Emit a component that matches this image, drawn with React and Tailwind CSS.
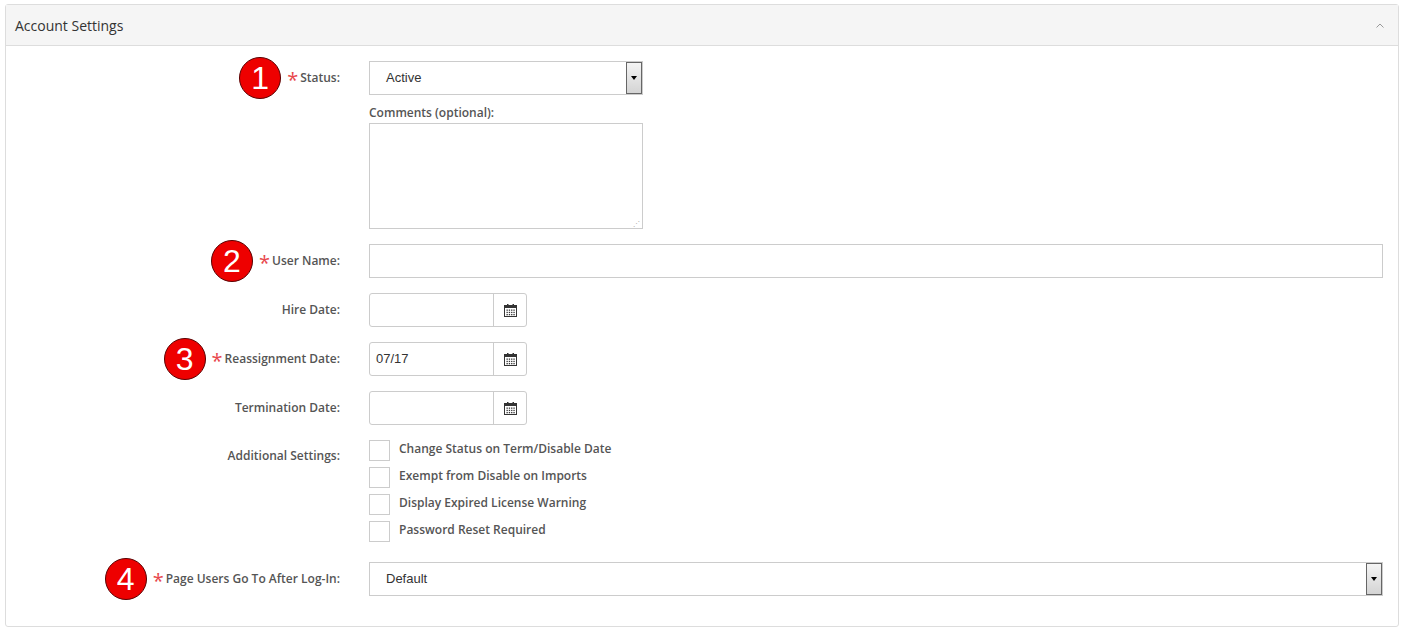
import React from "react";

const Badge = ({ n }) => (
  <span className="mr-[6px] flex h-[42px] w-[42px] items-center justify-center rounded-full border border-[#5a0000] bg-[#ee0000] text-[32px] leading-none text-white" style={{ fontFamily: "'Liberation Sans', Arial, sans-serif" }}>{n}</span>
);

const Label = ({ text, req, badge, top }) => (
  <div className={`flex w-[334px] shrink-0 justify-end ${top ? "items-start pt-[8px]" : "items-center"}`}>
    {badge && <Badge n={badge} />}
    {req && <span className="mr-[2px] text-[20px] leading-none text-[#e8474c] mt-[4px]">*</span>}
    <span className="text-[12px] font-semibold text-[#555]">{text}</span>
  </div>
);

const Cal = () => (
  <svg width="13" height="13" viewBox="0 0 13 13">
    <rect x="0.5" y="1.5" width="12" height="11" fill="none" stroke="#333" />
    <rect x="0.5" y="1.5" width="12" height="2.5" fill="#333" />
    <rect x="3" y="0" width="1.5" height="3" fill="#333" />
    <rect x="8.5" y="0" width="1.5" height="3" fill="#333" />
    {[5.5, 7.8, 10].map((y) => [2.5, 4.8, 7.1, 9.4].map((x) => <rect key={x + "-" + y} x={x} y={y} width="1.3" height="1.3" fill="#333" />))}
  </svg>
);

const DateInput = ({ value }) => (
  <div className="flex h-[34px] w-[158px] rounded-[3px] border border-[#ccc]">
    <div className="flex flex-1 items-center px-[6px] text-[13px] text-[#333]" style={{ fontFamily: "'Liberation Sans', Arial, sans-serif" }}>{value}</div>
    <div className="flex w-[33px] items-center justify-center border-l border-[#ccc]"><Cal /></div>
  </div>
);

const Select = ({ value, w }) => (
  <div className={`flex h-[34px] ${w} items-center justify-between border border-[#ccc] pl-[16px]`} style={{ fontFamily: "'Liberation Sans', Arial, sans-serif" }}>
    <span className="text-[13px] text-[#333]">{value}</span>
    <div className="flex h-[32px] w-[16px] items-center justify-center border border-[#666] bg-gradient-to-b from-[#f4f4f4] to-[#d4d4d4]">
      <span className="h-0 w-0 border-x-[3.5px] border-t-[4px] border-x-transparent border-t-black" />
    </div>
  </div>
);

const Row = ({ children, className = "" }) => <div className={`flex ${className}`}>{children}</div>;

export default function App() {
  return (
    <div className="min-h-[627px] bg-white pl-[5px] pr-[3px] pt-[4px]" style={{ fontFamily: "'Open Sans', sans-serif" }}>
      <div className="h-[623px] rounded-[3px] border border-[#ddd]">
        <div className="flex h-[41px] items-center justify-between border-b border-[#ddd] bg-[#f5f5f5] px-[9px]">
          <span className="text-[14px] text-[#333]">Account Settings</span>
          <svg width="8" height="5" viewBox="0 0 8 5" className="mr-[5px]"><path d="M0.5 4.5 L4 1 L7.5 4.5" fill="none" stroke="#999" /></svg>
        </div>
        <div className="flex flex-col gap-[15px] pr-[15px] pt-[15px]">
          <Row className="gap-[29px]">
            <div className="flex h-[34px]"><Label text="Status:" req badge="1" /></div>
            <div className="flex flex-col">
              <Select value="Active" w="w-[274px]" />
              <span className="mt-[9px] text-[12px] font-semibold text-[#555]">Comments (optional):</span>
              <div className="relative mt-[1px] h-[106px] w-[274px] border border-[#ccc]">
                <span className="absolute bottom-[1px] right-[2px] text-[7px] leading-none text-[#aaa]">⋰</span>
              </div>
            </div>
          </Row>
          <Row className="h-[34px] gap-[29px]">
            <Label text="User Name:" req badge="2" />
            <div className="h-[34px] flex-1 border border-[#ccc]" />
          </Row>
          <Row className="h-[34px] gap-[29px]"><Label text="Hire Date:" /><DateInput /></Row>
          <Row className="h-[34px] gap-[29px]"><Label text="Reassignment Date:" req badge="3" /><DateInput value="07/17" /></Row>
          <Row className="h-[34px] gap-[29px]"><Label text="Termination Date:" /><DateInput /></Row>
          <Row className="gap-[29px]">
            <div className="flex h-[32px]"><Label text="Additional Settings:" /></div>
            <div className="flex flex-col gap-[6px]">
              {["Change Status on Term/Disable Date", "Exempt from Disable on Imports", "Display Expired License Warning", "Password Reset Required"].map((t) => (
                <div key={t} className="flex h-[21px] items-center gap-[9px]">
                  <span className="h-[21px] w-[21px] border border-[#ccc]" />
                  <span className="-mt-[4px] text-[12px] font-semibold text-[#555]">{t}</span>
                </div>
              ))}
            </div>
          </Row>
          <Row className="mt-[5px] h-[34px] gap-[29px]">
            <Label text="Page Users Go To After Log-In:" req badge="4" />
            <div className="flex-1"><Select value="Default" w="w-full" /></div>
          </Row>
        </div>
      </div>
    </div>
  );
}
